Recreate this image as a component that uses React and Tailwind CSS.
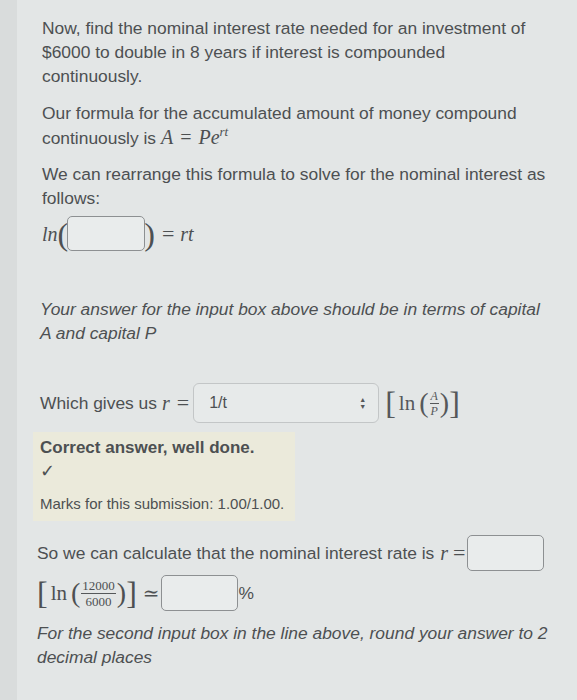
import React from 'react'

const serif = { fontFamily: '"Liberation Serif", "DejaVu Serif", serif' }

function Frac({ top, bottom, size = 'text-[11px]' }) {
  return (
    <span className={`inline-flex flex-col items-center align-middle leading-none mx-[1px] ${size}`}>
      <span className="px-[1px] pb-[1px]">{top}</span>
      <span className="w-full border-t border-[#55585a]" />
      <span className="px-[1px] pt-[1px]">{bottom}</span>
    </span>
  )
}

function Box({ className = '' }) {
  return <span className={`inline-block shrink-0 rounded-[5px] border border-[#8d9092] bg-[#e9ecec] align-middle ${className}`} />
}

export default function App() {
  return (
    <div
      className="flex min-h-[700px] bg-[#d9dcdc] text-[#4d5052]"
      style={{ fontFamily: '"Liberation Sans", Arial, sans-serif' }}
    >
      <div className="w-[17px] shrink-0" />
      <div className="flex-1 bg-[#e3e6e6] text-[17.4px] leading-[24px]">
        <div className="pl-[25px] pr-[29px] pt-4">
          <p>Now, find the nominal interest rate needed for an investment of $6000 to double in 8 years if interest is compounded continuously.</p>
          <p className="mt-[13px]">
            Our formula for the accumulated amount of money compound continuously is{' '}
            <span style={serif} className="inline-flex h-[24px] items-baseline text-[20px] italic">
              <span>A</span>
              <span className="not-italic mx-[7px]">=</span>
              <span>Pe</span>
              <span className="relative -top-[8px] text-[13px]">rt</span>
            </span>
          </p>
          <p className="mt-[12px]">We can rearrange this formula to solve for the nominal interest as follows:</p>
          <div className="mt-[6px] flex h-[35px] items-center" style={serif}>
            <span className="text-[20px] italic">ln</span>
            <span className="text-[32px] leading-none font-light">(</span>
            <Box className="h-[35px] w-[78px] -ml-[1px] -mr-[1px]" />
            <span className="text-[32px] leading-none font-light">)</span>
            <span className="ml-[7px] text-[22px]">=</span>
            <span className="ml-[6px] text-[20px] italic">rt</span>
          </div>
        </div>

        <div className="pl-[23px] pr-[29px]">
          <p className="mt-[46px] italic">Your answer for the input box above should be in terms of capital A and capital P</p>
          <div className="mt-[38px] flex h-[40px] items-center">
            <span>Which gives us</span>
            <span style={serif} className="ml-[5px] text-[20px] italic">r</span>
            <span style={serif} className="ml-[7px] text-[22px]">=</span>
            <div className="ml-[4px] flex h-[40px] w-[186px] items-center justify-between rounded-[6px] border border-[#c3c6c7] bg-[#e7eaea] pl-[15px] pr-[12px] text-[16px]">
              <span>1/t</span>
              <span className="flex flex-col items-center leading-none text-[7px] text-[#55585a]">
                <span>▲</span>
                <span>▼</span>
              </span>
            </div>
            <span style={serif} className="ml-[6px] flex items-center text-[#55585a]">
              <span className="text-[32px] font-light leading-none">[</span>
              <span className="text-[21px] ml-[3px]">ln</span>
              <span className="text-[28px] font-light leading-none ml-[4px]">(</span>
              <Frac top={<i>A</i>} bottom={<i>P</i>} size="text-[12px]" />
              <span className="text-[28px] font-light leading-none">)</span>
              <span className="text-[32px] font-light leading-none">]</span>
            </span>
          </div>
        </div>

        <div className="ml-[16px] mt-[9px] w-[262px] bg-[#ebeadb] pl-[7px] pt-[4px] pb-[7px]">
          <p className="font-bold text-[17px]">Correct answer, well done.</p>
          <p className="text-[18px] leading-[22px]">✓</p>
          <p className="mt-[12px] text-[15px] leading-[20px]">Marks for this submission: 1.00/1.00.</p>
        </div>

        <div className="pl-[20px] pr-[12px]">
          <div className="mt-[14px] flex h-[36px] items-center whitespace-nowrap">
            <span>So we can calculate that the nominal interest rate is</span>
            <span style={serif} className="ml-[6px] text-[20px] italic">r</span>
            <span style={serif} className="ml-[5px] text-[22px]">=</span>
            <Box className="ml-[1px] h-[36px] w-[77px]" />
          </div>
          <div className="mt-[4px] flex h-[36px] items-center" style={serif}>
            <span className="text-[32px] font-light leading-none">[</span>
            <span className="text-[21px] ml-[3px]">ln</span>
            <span className="text-[28px] font-light leading-none ml-[4px]">(</span>
            <Frac top="12000" bottom="6000" size="text-[13px]" />
            <span className="text-[28px] font-light leading-none">)</span>
            <span className="text-[32px] font-light leading-none">]</span>
            <span className="ml-[6px] text-[20px]">≃</span>
            <Box className="ml-[1px] h-[36px] w-[77px]" />
            <span className="ml-[1px] text-[17.4px]" style={{ fontFamily: '"Liberation Sans", Arial, sans-serif' }}>%</span>
          </div>
          <p className="mt-[10px] pr-[10px] italic">For the second input box in the line above, round your answer to 2 decimal places</p>
        </div>
      </div>
    </div>
  )
}
